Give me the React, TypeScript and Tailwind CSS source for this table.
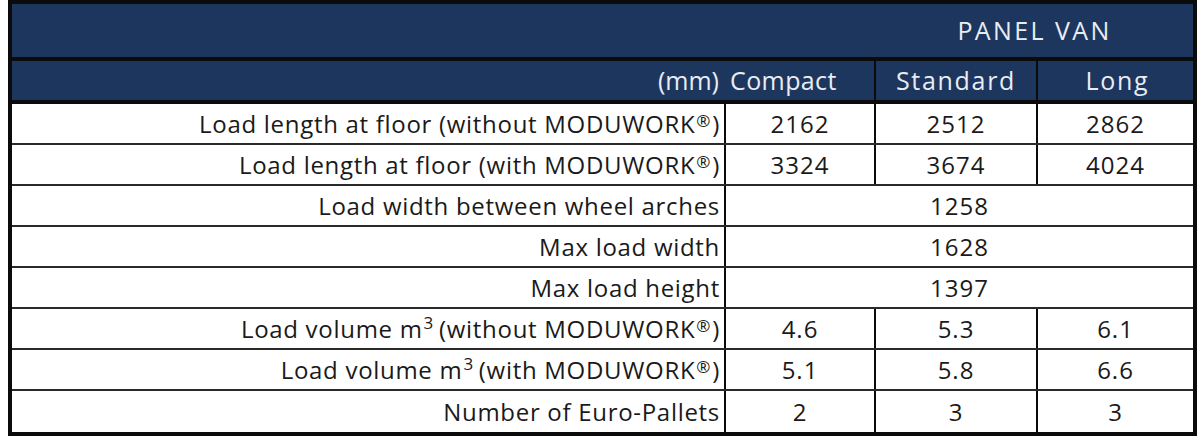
import React from "react";

const Sup = () => <sup className="text-[17px] relative -top-[6px] ml-[1px] mr-[5px]">3</sup>;
const Reg = () => <span className="text-[17px] relative -top-[3px] mx-[1px]">®</span>;

const rows: { label: React.ReactNode; values: string[] }[] = [
  { label: <>Load length at floor (without MODUWORK<Reg />)</>, values: ["2162", "2512", "2862"] },
  { label: <>Load length at floor (with MODUWORK<Reg />)</>, values: ["3324", "3674", "4024"] },
  { label: <>Load width between wheel arches</>, values: ["1258"] },
  { label: <>Max load width</>, values: ["1628"] },
  { label: <>Max load height</>, values: ["1397"] },
  {
    label: (
      <>
        Load volume m<Sup />(without MODUWORK<Reg />)
      </>
    ),
    values: ["4.6", "5.3", "6.1"],
  },
  {
    label: (
      <>
        Load volume m<Sup />(with MODUWORK<Reg />)
      </>
    ),
    values: ["5.1", "5.8", "6.6"],
  },
  { label: <>Number of Euro-Pallets</>, values: ["2", "3", "3"] },
];

export default function App() {
  return (
    <div className="w-[1200px] h-[438px] bg-white" style={{ fontFamily: '"Open Sans", "Noto Sans", sans-serif' }}>
      <div className="ml-[8px] w-[1189px] h-[436px] border-4 border-[#0b0b0b] flex flex-col">
        {/* header row 1 */}
        <div className="h-[57px] border-b-4 border-[#0b0b0b] bg-[#1d365e] grid grid-cols-[862px_319px]">
          <div />
          <div className="flex items-center justify-center pl-[2px] text-[25px] text-[#e8edf4] tracking-[2.4px]">
            PANEL VAN
          </div>
        </div>
        {/* header row 2 */}
        <div className="h-[43px] border-b-4 border-[#0b0b0b] bg-[#1d365e] grid grid-cols-[712px_150px_162px_157px] text-[25px] text-[#e8edf4]">
          <div className="flex items-center justify-end pr-[5px]">(mm)</div>
          <div className="flex items-center pl-[6px] tracking-[0.4px]">Compact</div>
          <div className="flex items-center justify-center border-l-2 border-[#0b0b0b] tracking-[1.7px]">Standard</div>
          <div className="flex items-center justify-center border-l-2 border-[#0b0b0b] tracking-[1.7px] pl-[4px]">Long</div>
        </div>
        {/* data rows */}
        {rows.map((r, i) => (
          <div
            key={i}
            className={`h-[41px] grid grid-cols-[712px_150px_162px_157px] text-[#1a1a1a] ${
              i < rows.length - 1 ? "border-b-2 border-[#2a2a2a]" : ""
            }`}
          >
            <div className="flex items-center justify-end pr-[4px] text-[24px] tracking-[0.7px] whitespace-nowrap">
              {r.label}
            </div>
            {r.values.length === 1 ? (
              <div className="col-span-3 flex items-center justify-center border-l-2 border-[#0b0b0b] text-[24px] tracking-[1px]">
                {r.values[0]}
              </div>
            ) : (
              r.values.map((v, j) => (
                <div
                  key={j}
                  className="flex items-center justify-center border-l-2 border-[#0b0b0b] text-[24px] tracking-[1px]"
                >
                  {v}
                </div>
              ))
            )}
          </div>
        ))}
      </div>
    </div>
  );
}
